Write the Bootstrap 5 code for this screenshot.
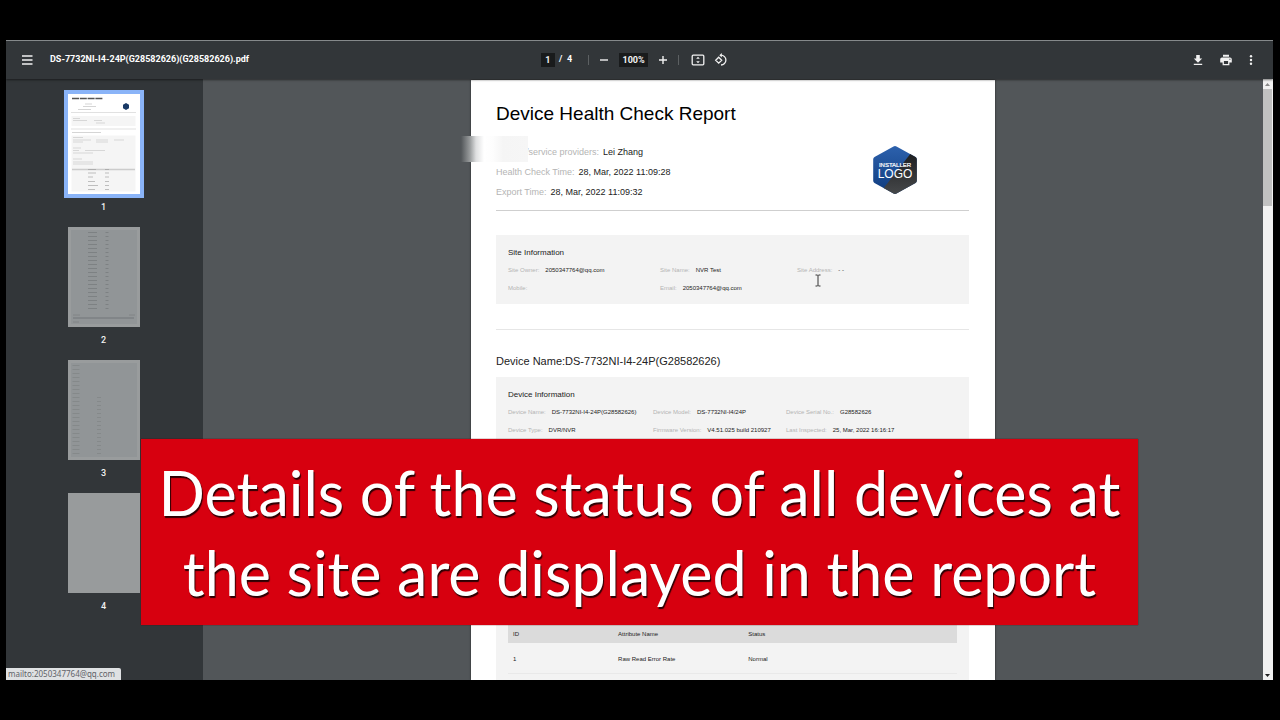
<!DOCTYPE html>
<html lang="en">
<head>
<meta charset="utf-8">
<meta name="viewport" content="width=device-width, initial-scale=1">
<title>DS-7732NI-I4-24P(G28582626)(G28582626).pdf</title>
<link href="https://cdn.jsdelivr.net/npm/bootstrap@5.3.0/dist/css/bootstrap.min.css" rel="stylesheet">
<style>
  body { background: #000; font-family: Roboto, "Liberation Sans", sans-serif; }
  .stage { height: 100vh; padding: 40px 7px 40px 6px; }
  .viewer { background: #525659; border-top: 1px solid #85898b; }
  .toolbar { background: #323639; height: 38px; padding: 0 19px 0 14px; color: #fff; font-size: 9px; font-weight: 700; box-shadow: 0 1px 2px rgba(0,0,0,.5); z-index: 2; }
  .tool { padding: 0; border: 0; background: none; color: #f1f1f1; line-height: 0; }
  .tool-field { background: #191b1c; border: 0; color: #f1f1f1; height: 14px; padding: 0; text-align: center; font-size: 9px; font-weight: 700; }
  .page-field { width: 14px; }
  .page-count { padding: 0 16px 0 4px; white-space: nowrap; }
  .zoom-field { width: 29px; }
  .rule { width: 1px; height: 10px; background: #5c6062; }
  .thumbs { width: 197px; flex: none; background: #323639; padding: 11px 2px 0 0; font-size: 9px; font-weight: 500; line-height: 9px; }
  .thumb { color: #f1f1f1; text-decoration: none; gap: 5px; margin-bottom: 11px; }
  .thumb svg { border: 4px solid transparent; box-sizing: content-box; }
  .thumb.current svg { border-color: #8ab4f8; }
  .scroller { width: 10px; flex: none; background: #f1f1f1; padding-right: 1px; }
  .scroll-thumb { height: 117px; background: #c1c1c1; }
  .sheet { width: 524px; margin-top: 1px; padding: 24px 26px 0 25px; background: #fff; color: #222; box-shadow: 0 0 2px rgba(0,0,0,.6); font-family: "Liberation Sans", Arial, sans-serif; font-size: 6px; line-height: 8px; }
  .sheet h1 { font-size: 19px; line-height: 20px; color: #000; margin: 0 0 18px; font-weight: 400; }
  .facts { font-size: 9px; line-height: 20px; }
  .facts dt, .pairs dt { font-weight: 400; color: #b4b4b4; }
  .facts dd, .pairs dd { margin: 0; }
  .facts div { gap: 4px; }
  .redacted { padding-left: 30px; }
  .smudge { left: -35px; top: -6px; width: 67px; height: 26px; background: linear-gradient(90deg, #525659 0, #999c9d 9px, #dedfe0 15px, #fff 23px, #fdfdfd 32px, #f5f5f5 42px, #f6f6f6 100%); }
  .sheet hr { margin: 0; opacity: 1; border-color: #cfcfcf; }
  .sheet hr.divider { margin: 25px 0 24px; border-color: #e6e6e6; }
  .panel { background: #f3f3f3; padding: 13px 12px 12px; }
  .panel h3 { font-size: 8px; line-height: 10px; margin: 0 0 8px; font-weight: 400; }
  .pairs { display: grid; row-gap: 10px; margin: 0; }
  .pairs div { gap: 6px; white-space: nowrap; }
  .site-pairs { grid-template-columns: 152fr 137fr 160fr; }
  .device-pairs { grid-template-columns: 145fr 133fr 171fr; }
  .sheet h2 { font-size: 11px; line-height: 14px; margin: 0 0 9px; font-weight: 400; }
  .health { width: 100%; margin-top: 191px; }
  .health th, .health td { padding: 5px; font-weight: 400; }
  .health td { padding: 12px 5px 10px; border-bottom: 1px solid #e9e9e9; }
  .health thead { background: #dbdbdb; }
  .status { background: #dfe1e3; color: #5f6368; font-family: "Noto Sans", sans-serif; font-size: 8px; line-height: 12px; padding: 0 6px 0 2px; border-top-right-radius: 2px; z-index: 3; }
  .caption { bottom: 95px; padding-right: 1px; z-index: 5; }
  .caption p { background: #d7000f; color: #fff; margin: 0; width: 997px; font-family: Lato, sans-serif; font-weight: 400; font-size: 61px; line-height: 80px; padding: 14px 0 12px; text-align: center; text-shadow: 1px 2px 1px rgba(0,0,0,.8); box-shadow: 0 0 1px #500; }
  .cursor { left: 814px; top: 274px; z-index: 4; line-height: 0; }
</style>
</head>
<body>
<div class="stage">
  <div class="viewer d-flex flex-column h-100 position-relative overflow-hidden">
    <header class="toolbar d-flex align-items-center flex-shrink-0 position-relative">
      <div class="d-flex align-items-center flex-fill w-50">
        <button class="tool" aria-label="Menu"><svg width="14" height="14" viewBox="0 0 14 14"><path d="M2 3h10.500M2 7h10.500M2 11h10.500" stroke="currentColor" stroke-width="1.500"/></svg></button>
        <span class="ms-3">DS-7732NI-I4-24P(G28582626)(G28582626).pdf</span>
      </div>
      <div class="d-flex align-items-center flex-shrink-0">
        <input class="tool-field page-field" value="1" aria-label="Page"><span class="page-count">/&ensp;4</span>
        <span class="rule me-2"></span>
        <button class="tool" aria-label="Zoom out"><svg width="14" height="14" viewBox="0 0 14 14"><path d="M3 7h8" stroke="currentColor" stroke-width="1.400"/></svg></button>
        <input class="tool-field zoom-field mx-2" value="100%" aria-label="Zoom">
        <button class="tool" aria-label="Zoom in"><svg width="14" height="14" viewBox="0 0 14 14"><path d="M3 7h8M7 3v8" stroke="currentColor" stroke-width="1.400"/></svg></button>
        <span class="rule mx-2"></span>
        <button class="tool ms-1" aria-label="Fit to page"><svg width="14" height="14" viewBox="0 0 14 14"><rect x="1.200" y="2.200" width="11.600" height="9.600" rx="1" fill="none" stroke="currentColor" stroke-width="1.300"/><path d="M7 3.800l1.800 2H5.200zM7 10.200l1.800-2H5.200z" fill="currentColor"/></svg></button>
        <button class="tool ms-2 me-1" aria-label="Rotate"><svg width="16" height="14" viewBox="0 0 16 14"><path d="M5.700 4.200l3 3-3 3-3-3zM8 2.200a4.900 4.900 0 1 1 0 9.800" fill="none" stroke="currentColor" stroke-width="1.300"/><path d="M8.800 0v4.400L6.300 2.200z" fill="currentColor"/></svg></button>
      </div>
      <div class="d-flex align-items-center justify-content-end flex-fill w-50">
        <button class="tool me-3" aria-label="Download"><svg width="12" height="12" viewBox="0 0 12 12"><path d="M4.200 1h3.600v3.500h2.400L6 8.700 1.800 4.500h2.400zM1.800 9.700h8.400V11H1.800z" fill="currentColor"/></svg></button>
        <button class="tool me-3" aria-label="Print"><svg width="12" height="12" viewBox="0 0 12 12"><path fill-rule="evenodd" d="M3 .8h6v2H3zM2 3.400h8a1.800 1.800 0 0 1 1.800 1.800v3.400H9.400v2.600H2.600V8.600H.2V5.200A1.800 1.800 0 0 1 2 3.400zM3.900 7v3h4.200V7zM9.400 4.700v1h1v-1z" fill="currentColor"/></svg></button>
        <button class="tool" aria-label="More"><svg width="6" height="12" viewBox="0 0 6 12"><g fill="currentColor"><circle cx="3" cy="2.200" r="1.200"/><circle cx="3" cy="6" r="1.200"/><circle cx="3" cy="9.800" r="1.200"/></g></svg></button>
      </div>
    </header>

    <div class="d-flex flex-fill overflow-hidden">
      <nav class="thumbs" aria-label="Pages">
        <a class="thumb current d-flex flex-column align-items-center" href="#p1">
          <svg width="72" height="100" viewBox="0 0 72 100"><rect width="72" height="100" fill="#fff"/><path d="M4 4.500h31" stroke="#555" stroke-width="1.300" stroke-dasharray="7 .8"/><path d="M17 10h7M15 12.500h13M10 15.500h13M5 24.500h7M5 26.500h14M26 26.500h8M28 29h9M4 38.500h29M5 43.500h10M5 46h18M28 46h12M46 46h10M5 48h10M28 48h12M5 54h8M5 56.500h6M17 56.500h20M5 59h20M5 65h9M5 68h20M5 70h20" stroke="#aaa" stroke-width=".5"/><path d="M3 18.500h65M3 35h65" stroke="#ccc" stroke-width=".6"/><path d="M3.500 22h64v10h-64zM3.500 41.500h64v56h-64z" fill="#ddd" opacity=".3"/><path d="M4 75.500h63" stroke="#ccc" stroke-width="1.600"/><path d="M20 75.500h8M37 75.500h4M20 79h8M37 79h4M20 83h5M37 83h4M20 87.500h7M37 87.500h4M20 91.500h10M37 91.500h4M20 95.500h7M37 95.500h4" stroke="#999" stroke-width=".6"/><path d="M58 9l3 1.700v3.500L58 16l-3-1.800v-3.500z" fill="#193a66"/></svg>
          <span>1</span>
        </a>
        <a class="thumb d-flex flex-column align-items-center" href="#p2">
          <svg width="72" height="100" viewBox="0 0 72 100"><rect width="72" height="100" fill="#999c9d"/><rect x="3" y="3" width="66" height="94" fill="#919597"/><path d="M24.500 5v79" stroke="#777b7d" stroke-width="9" stroke-dasharray=".8 3.200"/><path d="M39 5v79" stroke="#777b7d" stroke-width="3" stroke-dasharray=".8 3.200"/><path d="M5 91h61" stroke="#7d8183" stroke-width="1.600"/><path d="M5 88h7M61 88h6M5 95h6" stroke="#7d8183" stroke-width=".8"/></svg>
          <span>2</span>
        </a>
        <a class="thumb d-flex flex-column align-items-center" href="#p3">
          <svg width="72" height="100" viewBox="0 0 72 100"><rect width="72" height="100" fill="#999c9d"/><rect x="3" y="3" width="66" height="94" fill="#919597"/><path d="M8 5v92" stroke="#818587" stroke-width="7" stroke-dasharray=".8 3.200"/><path d="M31 37v58" stroke="#818587" stroke-width="4" stroke-dasharray=".8 3.200"/></svg>
          <span>3</span>
        </a>
        <a class="thumb d-flex flex-column align-items-center" href="#p4">
          <svg width="72" height="100" viewBox="0 0 72 100"><rect width="72" height="100" fill="#989b9c"/></svg>
          <span>4</span>
        </a>
      </nav>

      <main class="flex-fill d-flex justify-content-center">
        <article class="sheet" id="p1">
          <h1>Device Health Check Report</h1>
          <div class="d-flex justify-content-between align-items-center">
            <dl class="facts position-relative mb-0">
              <div class="d-flex redacted"><dt>/service providers:</dt><dd>Lei Zhang</dd></div>
              <div class="d-flex"><dt>Health Check Time:</dt><dd>28, Mar, 2022 11:09:28</dd></div>
              <div class="d-flex"><dt>Export Time:</dt><dd>28, Mar, 2022 11:09:32</dd></div>
              <div class="smudge position-absolute"></div>
            </dl>
            <svg class="me-5 mb-1" width="52" height="50" viewBox="0 0 52 50" role="img" aria-label="Installer logo">
              <defs>
                <linearGradient id="blue" x2="0" y2="1"><stop stop-color="#2d62ae"/><stop offset="1" stop-color="#0e3a7c"/></linearGradient>
                <linearGradient id="coal" x2="0" y2="1"><stop stop-color="#1d1e20"/><stop offset="1" stop-color="#47494b"/></linearGradient>
                <clipPath id="hex"><path d="M24.500 1.400q1.500-.9 3 0l19 10.600q1.300.8 1.300 2.200v21.600q0 1.400-1.300 2.200l-19 10.600q-1.500.9-3 0L5.500 38q-1.300-.8-1.300-2.200V14.200q0-1.400 1.300-2.200z"/></clipPath>
              </defs>
              <g clip-path="url(#hex)"><rect width="52" height="50" fill="url(#blue)"/><path d="M42 8L14 44v6h38V8z" fill="url(#coal)"/></g>
              <g fill="#fff" text-anchor="middle" font-family="Liberation Sans, sans-serif"><text x="26" y="22" font-size="6" stroke="#fff" stroke-width=".2">INSTALLER</text><text x="26" y="33" font-size="12">LOGO</text></g>
            </svg>
          </div>
          <hr class="mt-2 mb-4">
          <section class="panel">
            <h3>Site Information</h3>
            <dl class="pairs site-pairs">
              <div class="d-flex"><dt>Site Owner:</dt><dd>2050347764@qq.com</dd></div>
              <div class="d-flex"><dt>Site Name:</dt><dd>NVR Test</dd></div>
              <div class="d-flex"><dt>Site Address:</dt><dd>- -</dd></div>
              <div class="d-flex"><dt>Mobile:</dt><dd></dd></div>
              <div class="d-flex"><dt>Email:</dt><dd>2050347764@qq.com</dd></div>
            </dl>
          </section>
          <hr class="divider">
          <h2>Device Name:DS-7732NI-I4-24P(G28582626)</h2>
          <section class="panel">
            <h3>Device Information</h3>
            <dl class="pairs device-pairs">
              <div class="d-flex"><dt>Device Name:</dt><dd>DS-7732NI-I4-24P(G28582626)</dd></div>
              <div class="d-flex"><dt>Device Model:</dt><dd>DS-7732NI-I4/24P</dd></div>
              <div class="d-flex"><dt>Device Serial No.:</dt><dd>G28582626</dd></div>
              <div class="d-flex"><dt>Device Type:</dt><dd>DVR/NVR</dd></div>
              <div class="d-flex"><dt>Firmware Version:</dt><dd>V4.51.025 build 210927</dd></div>
              <div class="d-flex"><dt>Last Inspected:</dt><dd>25, Mar, 2022 16:16:17</dd></div>
            </dl>
            <table class="health">
              <colgroup><col style="width:23.400%"><col style="width:29%"><col></colgroup>
              <thead><tr><th scope="col">ID</th><th scope="col">Attribute Name</th><th scope="col">Status</th></tr></thead>
              <tbody><tr><td>1</td><td>Raw Read Error Rate</td><td>Normal</td></tr></tbody>
            </table>
          </section>
        </article>
      </main>

      <div class="scroller d-flex flex-column align-items-center">
        <svg width="9" height="10" viewBox="0 0 9 10"><path d="M4.500 4L7 7H2z" fill="#888"/></svg>
        <div class="scroll-thumb w-100"></div>
        <svg class="mt-auto" width="9" height="10" viewBox="0 0 9 10"><path d="M4.500 7L7 4H2z" fill="#222"/></svg>
      </div>
    </div>
    <div class="status position-absolute bottom-0 start-0">mailto:2050347764@qq.com</div>
  </div>
</div>
<div class="caption position-fixed start-0 end-0 d-flex justify-content-center">
  <p>Details of the status of all devices at<br>the site are displayed in the report</p>
</div>
<div class="cursor position-absolute"><svg width="8" height="13" viewBox="0 0 8 13"><path d="M1.500 1h2l.5.500.5-.500h2M4 1.500v10M1.500 12h2l.5-.500.5.500h2" fill="none" stroke="#333"/></svg></div>
<script src="https://cdn.jsdelivr.net/npm/bootstrap@5.3.0/dist/js/bootstrap.bundle.min.js"></script>
</body>
</html>
